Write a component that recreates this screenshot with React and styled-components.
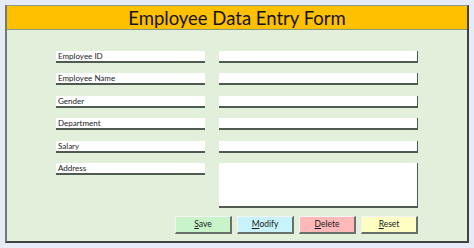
import React from "react";
import styled, { createGlobalStyle } from "styled-components";

const GlobalStyle = createGlobalStyle`
  html, body {
    margin: 0;
    padding: 0;
    background: #e7eaf7;
  }
  body {
    font-family: "Lato", "Liberation Sans", sans-serif;
  }
`;

const Page = styled.div`
  width: 474px;
  height: 248px;
  padding: 5px 0 0 5px;
  box-sizing: border-box;
`;

const Frame = styled.div`
  width: 464px;
  height: 238px;
  box-sizing: border-box;
  display: flex;
  flex-direction: column;
  border-top: 1px solid #8a9a8a;
  border-left: 2px solid #6f7d72;
  border-right: 2px solid #3d4540;
  border-bottom: 2px solid #3d4540;
  background: #e2efda;
`;

const TitleBar = styled.div`
  height: 24px;
  background: #ffc000;
  border-bottom: 1px solid #8a9a80;
  display: flex;
  align-items: center;
  justify-content: center;
  font-size: 18.5px;
  color: #141414;
  line-height: 1;
  padding-top: 1px;
  box-sizing: border-box;
`;

const Body = styled.div`
  flex: 1;
  padding: 21px 0 0 49px;
`;

const Grid = styled.div`
  display: grid;
  grid-template-columns: 149px 199px;
  column-gap: 14px;
  row-gap: 10.4px;
  align-items: start;
`;

const Label = styled.div`
  height: 12px;
  box-sizing: border-box;
  background: #ffffff;
  border-bottom: 2px solid #4f5a50;
  font-size: 8px;
  line-height: 10px;
  padding-left: 2px;
  color: #1a1a1a;
`;

const Input = styled.div`
  height: ${(p) => p.$h || 12}px;
  box-sizing: border-box;
  background: #ffffff;
  border-bottom: 2px solid #4f5a50;
  border-right: 1px solid #4f5a50;
`;

const Buttons = styled.div`
  display: flex;
  justify-content: flex-end;
  gap: 5px;
  width: 362px;
  margin-top: 8px;
`;

const Button = styled.div`
  width: 57px;
  height: 18px;
  box-sizing: border-box;
  background: ${(p) => p.$bg};
  border-top: 1px solid #f4f4f4;
  border-left: 1px solid #f4f4f4;
  border-right: 2px solid #6b6f6b;
  border-bottom: 2px solid #6b6f6b;
  display: flex;
  align-items: center;
  justify-content: center;
  font-size: 8.5px;
  color: #1a1a1a;

  u {
    text-decoration: underline;
    text-underline-offset: 1px;
  }
`;

const fields = ["Employee ID", "Employee Name", "Gender", "Department", "Salary"];

const buttons = [
  { label: "Save", bg: "#c9f3c9" },
  { label: "Modify", bg: "#c8f3fb" },
  { label: "Delete", bg: "#ffb9b9" },
  { label: "Reset", bg: "#ffffc4" },
];

export default function App() {
  return (
    <Page>
      <GlobalStyle />
      <Frame>
        <TitleBar>Employee Data Entry Form</TitleBar>
        <Body>
          <Grid>
            {fields.map((f) => (
              <React.Fragment key={f}>
                <Label>{f}</Label>
                <Input />
              </React.Fragment>
            ))}
            <Label>Address</Label>
            <Input $h={45} />
          </Grid>
          <Buttons>
            {buttons.map((b) => (
              <Button key={b.label} $bg={b.bg}>
                <span>
                  <u>{b.label[0]}</u>
                  {b.label.slice(1)}
                </span>
              </Button>
            ))}
          </Buttons>
        </Body>
      </Frame>
    </Page>
  );
}
